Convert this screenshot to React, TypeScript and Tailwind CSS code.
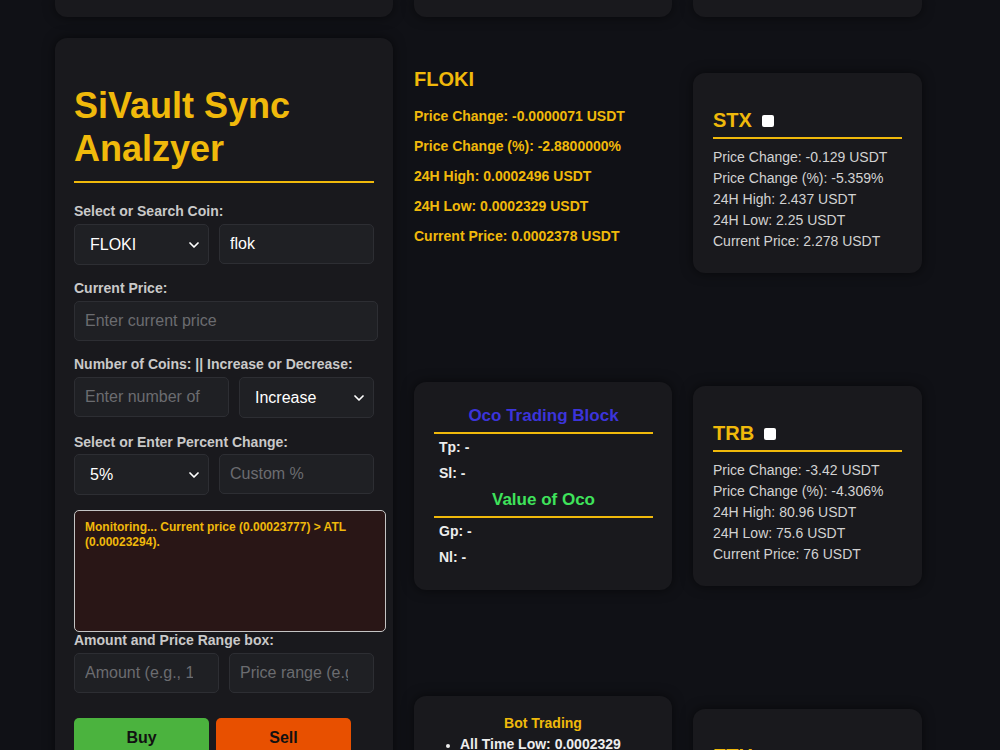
import React from "react";

const Y = "text-[#f0b90b]";
const CARD = "rounded-xl bg-[#19191d] shadow-[0_0_12px_rgba(0,0,0,0.55)]";
const FIELD =
  "h-[40px] rounded-[5px] border border-[#2d2e33] bg-[#1f2024] px-[10px] text-[16px] text-white outline-none placeholder:text-[#6b6c70]";
const LABEL = "text-[14px] font-bold leading-[16px] text-[#c9c9c9]";

function Chevron() {
  return (
    <svg width="10" height="6" viewBox="0 0 10 6" className="absolute right-[10px] top-1/2 -translate-y-1/2">
      <path d="M1 1l4 4 4-4" fill="none" stroke="#fff" strokeWidth="1.7" strokeLinecap="round" strokeLinejoin="round" />
    </svg>
  );
}

function Select({ value, w }: { value: string; w: string }) {
  return (
    <div className={`relative ${w}`}>
      <div className="flex h-[41px] items-center rounded-[5px] border border-[#2d2e33] bg-[#1f2024] pl-[15px] text-[16px] text-white">
        {value}
      </div>
      <Chevron />
    </div>
  );
}

function Ticker({ name, rows, top }: { name: string; rows: string[]; top: string }) {
  return (
    <div className={`${CARD} ${top} px-[20px] pt-[35px] pb-[21px]`}>
      <div className="flex items-center border-b-2 border-[#f0b90b] pb-[5px]">
        <span className={`text-[20px] font-bold leading-[24px] ${Y}`}>{name}</span>
        <span className="ml-[10px] mt-[2px] h-[12px] w-[12px] rounded-[2px] bg-white" />
      </div>
      <div className="mt-[8px] text-[14px] leading-[21px] text-[#d2d2d2]">
        {rows.map((r) => (
          <div key={r}>{r}</div>
        ))}
      </div>
    </div>
  );
}

export default function App() {
  return (
    <div className="h-[750px] overflow-hidden bg-[#101116] font-['Liberation_Sans',Arial,sans-serif]">
      <div className="flex gap-[21px] pl-[55px]">
        {/* left column */}
        <div className="w-[338px] shrink-0">
          <div className={`${CARD} h-[17px] rounded-t-none`} />
          <div className={`${CARD} mt-[21px] h-[760px] px-[19px] pt-[46px]`}>
            <h1 className={`w-[300px] border-b-2 border-[#f0b90b] pb-[11px] text-[36px] font-bold leading-[43px] ${Y}`}>
              SiVault Sync Analzyer
            </h1>

            <div className={`${LABEL} mt-[20px] mb-[5px]`}>Select or Search Coin:</div>
            <div className="flex items-start gap-[10px]">
              <Select value="FLOKI" w="w-[135px]" />
              <input
                defaultValue="flok"
                className={`${FIELD} w-[155px] border-[#1e6b1a]`}
              />
            </div>

            <div className={`${LABEL} mt-[15px] mb-[5px]`}>Current Price:</div>
            <input placeholder="Enter current price" className={`${FIELD} block w-[304px]`} />

            <div className={`${LABEL} mt-[15px] mb-[5px]`}>Number of Coins: || Increase or Decrease:</div>
            <div className="flex items-start gap-[10px]">
              <input placeholder="Enter number of coins" className={`${FIELD} w-[155px] pr-[27px]`} />
              <Select value="Increase" w="w-[135px]" />
            </div>

            <div className={`${LABEL} mt-[16px] mb-[4px]`}>Select or Enter Percent Change:</div>
            <div className="flex items-start gap-[10px]">
              <Select value="5%" w="w-[135px]" />
              <input placeholder="Custom %" className={`${FIELD} w-[155px]`} />
            </div>

            <div className="mt-[15px] h-[122px] w-[312px] rounded-[5px] border border-[#c4c4c4] bg-[#291616] px-[10px] pt-[9px] text-[12px] font-bold leading-[15px] text-[#f0b90b]">
              Monitoring... Current price (0.00023777) &gt; ATL (0.00023294).
            </div>

            <div className={`${LABEL} mb-[5px]`}>Amount and Price Range box:</div>
            <div className="flex gap-[10px]">
              <input placeholder="Amount (e.g., 100)" className={`${FIELD} w-[145px] pr-[25px]`} />
              <input placeholder="Price range (e.g., 5%)" className={`${FIELD} w-[145px] pr-[25px]`} />
            </div>

            <div className="mt-[25px] flex gap-[7px]">
              <button className="h-[40px] w-[135px] rounded-[5px] bg-[#4bb33e] text-[16px] font-bold text-[#111]">Buy</button>
              <button className="h-[40px] w-[135px] rounded-[5px] bg-[#e85000] text-[16px] font-bold text-[#111]">Sell</button>
            </div>
          </div>
        </div>

        {/* middle column */}
        <div className="w-[258px] shrink-0">
          <div className={`${CARD} h-[17px] rounded-t-none`} />
          <div className={`mt-[50px] text-[20px] font-bold leading-[24px] ${Y}`}>FLOKI</div>
          <div className={`mt-[10px] text-[14px] font-bold leading-[30px] ${Y}`}>
            <div>Price Change: -0.0000071 USDT</div>
            <div>Price Change (%): -2.8800000%</div>
            <div>24H High: 0.0002496 USDT</div>
            <div>24H Low: 0.0002329 USDT</div>
            <div>Current Price: 0.0002378 USDT</div>
          </div>

          <div className={`${CARD} mt-[131px] pl-[20px] pr-[19px] pt-[24px] pb-[20px]`}>
            <div className="border-b-2 border-[#f0b90b] pb-[6px] text-center text-[17px] font-bold leading-[20px] text-[#3c34da]">
              Oco Trading Block
            </div>
            <div className="pl-[5px] text-[14px] font-bold leading-[26px] text-[#ededed]">
              <div>Tp: -</div>
              <div>Sl: -</div>
            </div>
            <div className="mt-[4px] border-b-2 border-[#f0b90b] pb-[6px] text-center text-[17px] font-bold leading-[20px] text-[#3fe35b]">
              Value of Oco
            </div>
            <div className="pl-[5px] text-[14px] font-bold leading-[26px] text-[#ededed]">
              <div>Gp: -</div>
              <div>Nl: -</div>
            </div>
          </div>

          <div className={`${CARD} mt-[106px] h-[120px] px-[20px] pt-[18px]`}>
            <div className={`text-center text-[14px] font-bold leading-[18px] ${Y}`}>Bot Trading</div>
            <ul className="mt-[2px] list-disc pl-[26px] text-[14px] font-bold leading-[20px] text-[#ededed] marker:text-[12px]">
              <li>All Time Low: 0.0002329</li>
            </ul>
          </div>
        </div>

        {/* right column */}
        <div className="w-[229px] shrink-0">
          <div className={`${CARD} h-[17px] rounded-t-none`} />
          <Ticker
            name="STX"
            top="mt-[56px]"
            rows={[
              "Price Change: -0.129 USDT",
              "Price Change (%): -5.359%",
              "24H High: 2.437 USDT",
              "24H Low: 2.25 USDT",
              "Current Price: 2.278 USDT",
            ]}
          />
          <Ticker
            name="TRB"
            top="mt-[113px]"
            rows={[
              "Price Change: -3.42 USDT",
              "Price Change (%): -4.306%",
              "24H High: 80.96 USDT",
              "24H Low: 75.6 USDT",
              "Current Price: 76 USDT",
            ]}
          />
          <Ticker
            name="ETH"
            top="mt-[123px]"
            rows={[
              "Price Change: -52.1 USDT",
              "Price Change (%): -1.512%",
              "24H High: 3482.5 USDT",
              "24H Low: 3390.2 USDT",
              "Current Price: 3401.7 USDT",
            ]}
          />
        </div>
      </div>
    </div>
  );
}
